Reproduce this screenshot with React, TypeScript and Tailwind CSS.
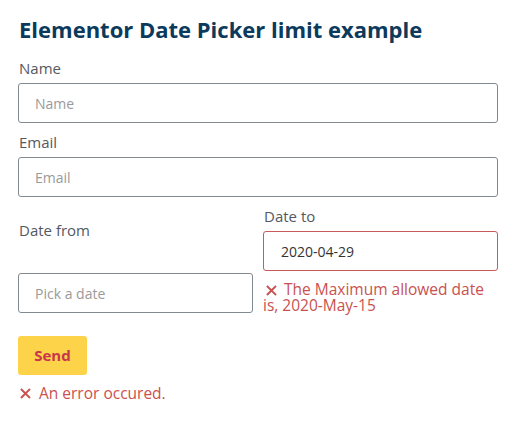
import React from 'react';

const font = { fontFamily: '"Open Sans", "Noto Sans", sans-serif' };

const Cross = ({ className }: { className?: string }) => (
  <svg viewBox="0 0 10 10" className={className} fill="none" stroke="currentColor" strokeWidth={1.8} strokeLinecap="square">
    <path d="M1.5 1.5 L8.5 8.5 M8.5 1.5 L1.5 8.5" />
  </svg>
);

const Field = ({ label, placeholder }: { label: string; placeholder: string }) => (
  <div className="mb-[10px] flex flex-col">
    <label className="mb-[5px] block text-[15px] leading-[19px] text-[#54595f] pl-px">{label}</label>
    <input
      placeholder={placeholder}
      className="h-[40px] w-full rounded-[3px] border border-[#818a91] bg-white px-[16px] text-[14px] text-[#333] outline-none placeholder:text-[#9a9a9a]"
    />
  </div>
);

export default function App() {
  return (
    <div className="min-h-[426px] w-[519px] bg-white" style={font}>
      <div className="w-[480px] pl-[18px] pt-[14px] box-content">
        <h2 className="mb-[15px] pl-px text-[22px] font-bold leading-[30px] text-[#0c3a5c]">
          Elementor Date Picker limit example
        </h2>

        <Field label="Name" placeholder="Name" />
        <Field label="Email" placeholder="Email" />

        <div className="mb-[13px] flex items-end gap-[10px]">
          <div className="flex w-[235px] flex-col pb-[10px]">
            <label className="mb-[33px] block pl-px text-[15px] leading-[19px] text-[#54595f]">Date from</label>
            <input
              placeholder="Pick a date"
              className="h-[40px] w-full rounded-[3px] border border-[#818a91] bg-white px-[16px] text-[14px] text-[#333] outline-none placeholder:text-[#9a9a9a]"
            />
          </div>
          <div className="flex w-[235px] flex-col">
            <label className="mb-[5px] block pl-px text-[15px] leading-[19px] text-[#54595f]">Date to</label>
            <input
              defaultValue="2020-04-29"
              className="h-[40px] w-full rounded-[3px] border border-[#c85a5a] bg-white px-[17px] text-[14px] text-[#333] outline-none"
            />
            <div className="my-[10px] text-[15.5px] leading-[16px] text-[#c9514f]">
              <Cross className="mr-[7px] ml-[3px] inline-block h-[11px] w-[11px] align-[-1px]" />
              The Maximum allowed date is, 2020-May-15
            </div>
          </div>
        </div>

        <button className="h-[39px] w-[69px] rounded-[3px] bg-[#fdd34a] text-[15px] font-bold text-[#c8364a]">
          Send
        </button>

        <div className="mt-[10px] flex items-center text-[15.5px] leading-[16px] text-[#c9514f]">
          <Cross className="mr-[8px] ml-[2px] h-[11px] w-[11px]" />
          An error occured.
        </div>
      </div>
    </div>
  );
}
